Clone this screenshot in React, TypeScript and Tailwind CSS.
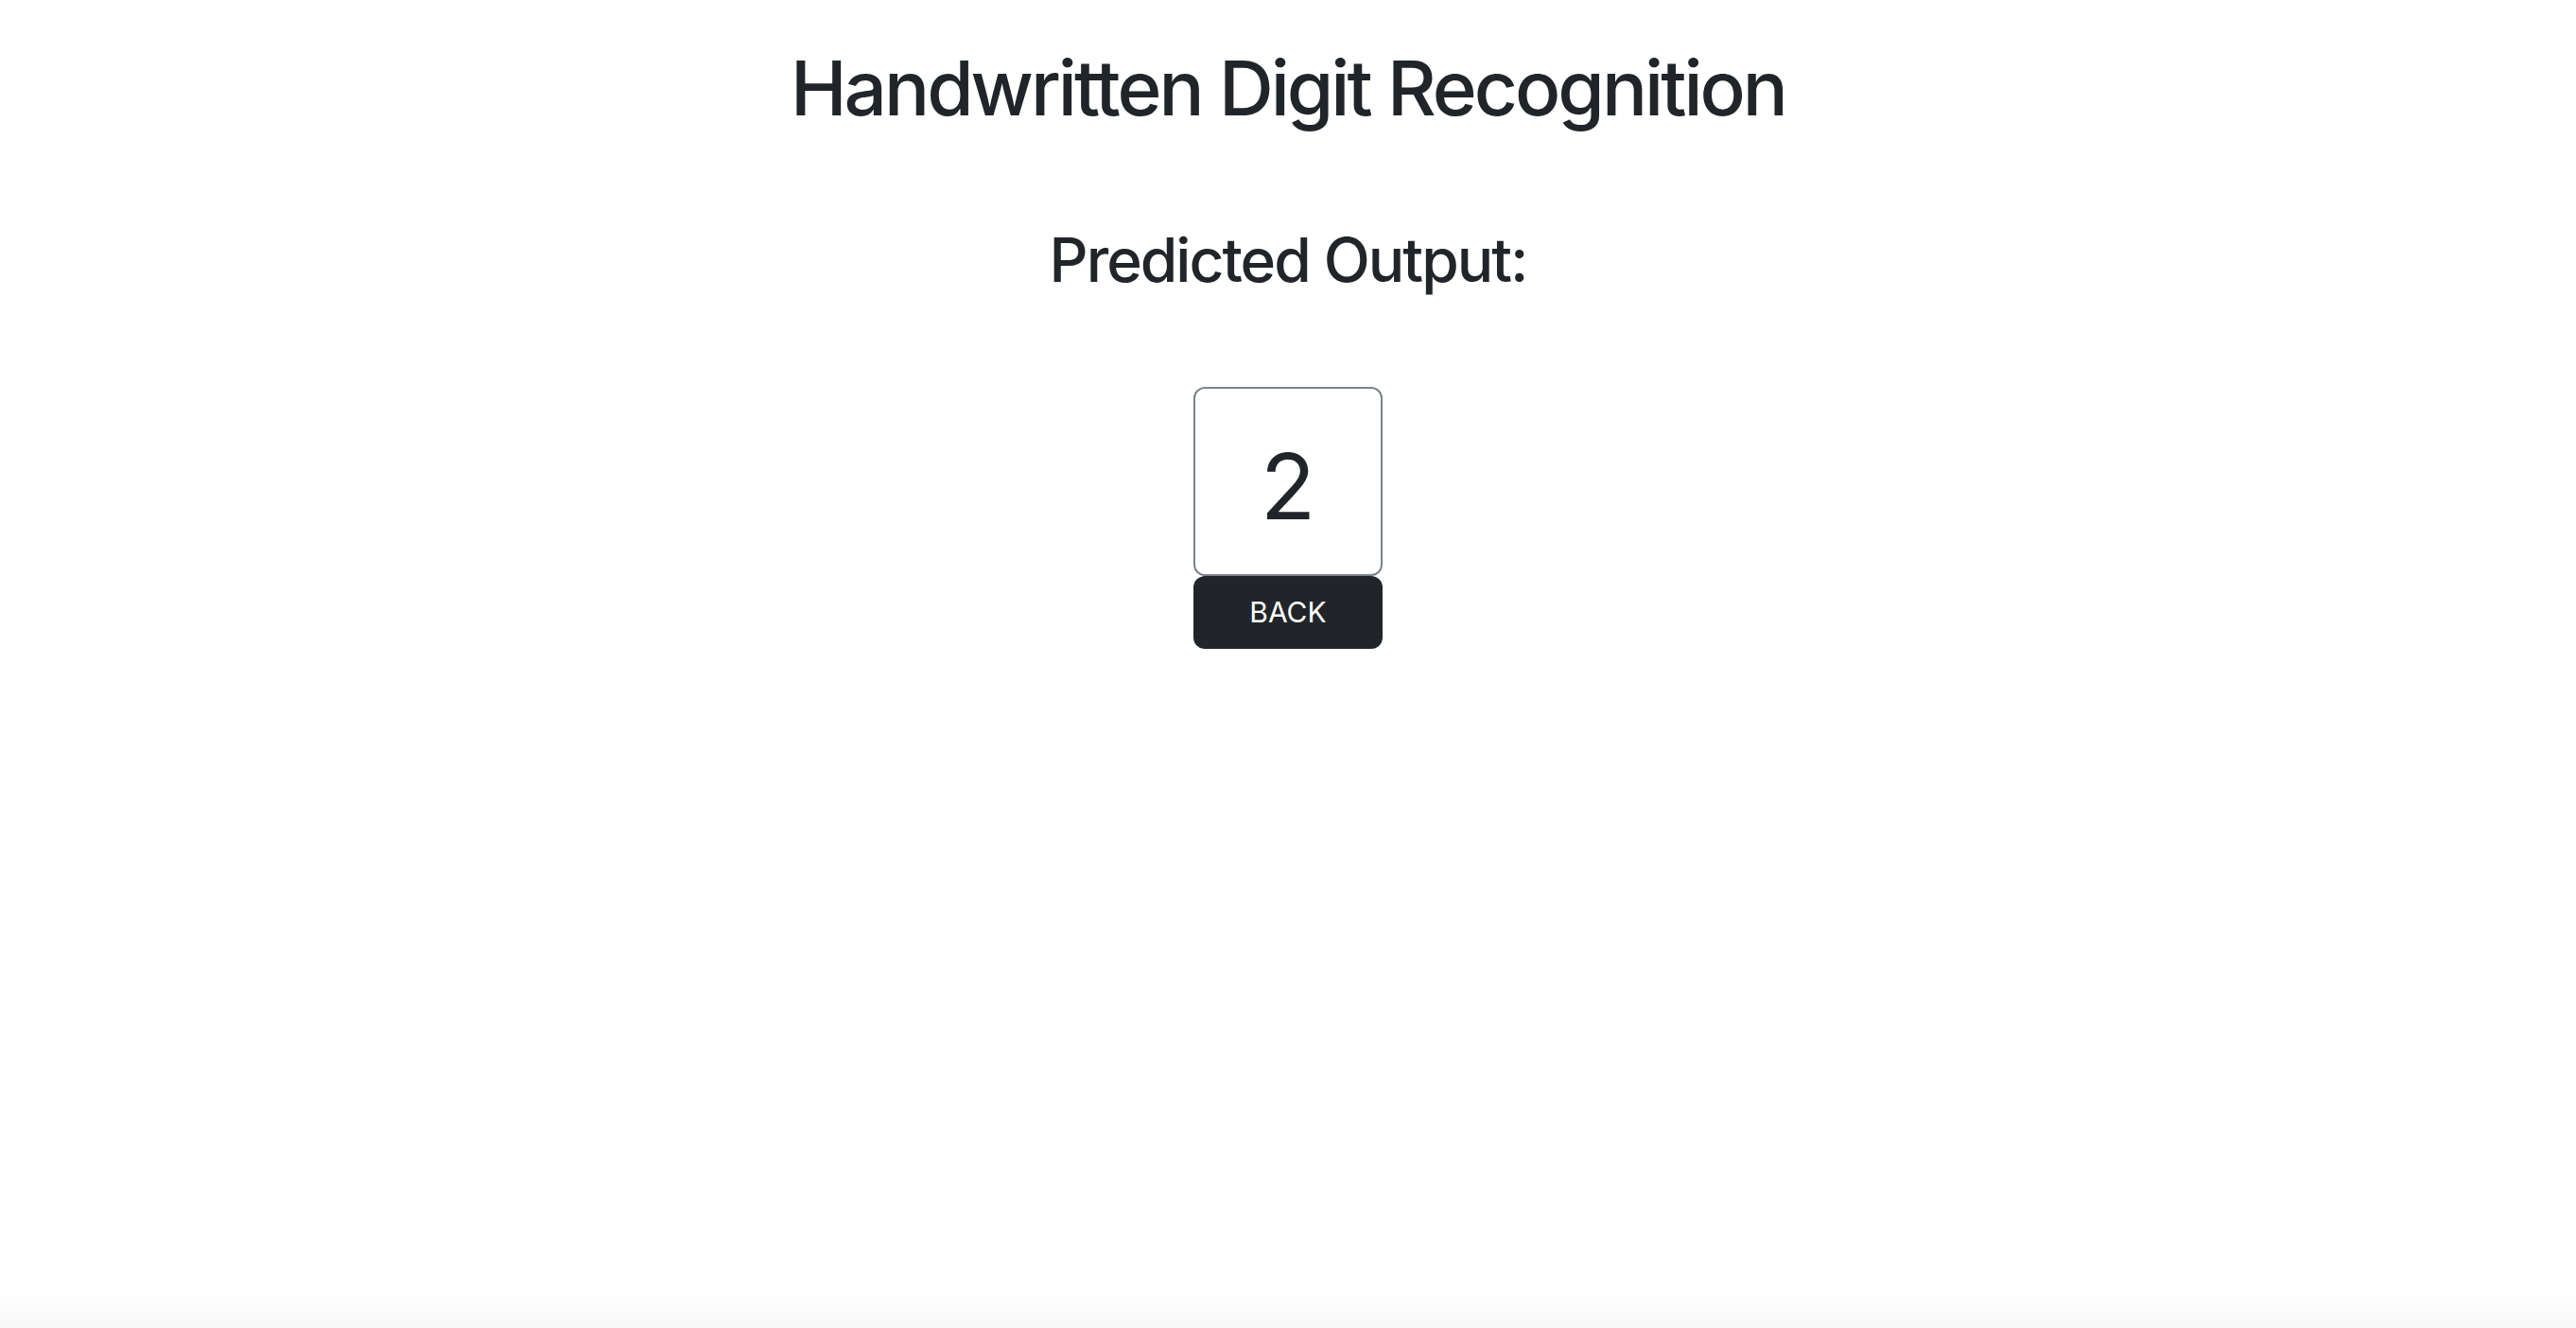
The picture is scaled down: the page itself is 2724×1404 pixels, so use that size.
export default function App() {
  return (
    <div className="h-screen flex flex-col bg-white text-[#212529] font-['Inter','Noto_Sans',sans-serif]">
      <main className="flex-1 flex flex-col items-center pt-[45px]">
        <h1 className="text-[80px] leading-[96px] font-medium tracking-[-3px]">Handwritten Digit Recognition</h1>

        <h2 className="mt-[95px] text-[64px] leading-[77px] font-medium tracking-[-2px]">Predicted Output:</h2>

        {/* result box with the back button underneath */}
        <div className="mt-[96px] flex flex-col w-[200px]">
          <div className="h-[200px] flex items-center justify-center pt-[10px] border-2 border-[#7d8389] rounded-[12px] bg-white">
            <span className="text-[96px] leading-none font-normal">2</span>
          </div>
          <button className="h-[77px] rounded-[12px] bg-[#212529] text-white text-[30px] font-normal">BACK</button>
        </div>
      </main>
      <div className="h-[36px] bg-gradient-to-b from-white to-[#f7f7f7]" />
    </div>
  );
}
